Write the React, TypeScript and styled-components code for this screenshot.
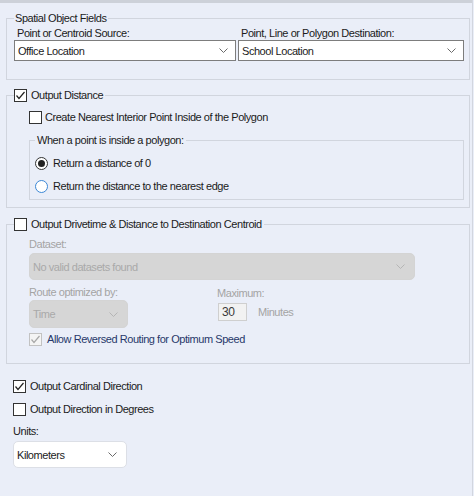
import styled, { createGlobalStyle } from 'styled-components'

const GlobalStyle = createGlobalStyle`
  html, body {
    margin: 0;
    padding: 0;
    background: #eaeef8;
  }
  body {
    font-family: "Liberation Sans", Arial, sans-serif;
    font-size: 11px;
    letter-spacing: -0.45px;
    color: #1b1b1b;
  }
`

const Page = styled.div`
  width: 473px;
  height: 496px;
  box-sizing: border-box;
  border-right: 1px solid #d2d6df;
  background: #eaeef8;
  overflow: hidden;
  display: flex;
  flex-direction: column;
`

const TopBar = styled.div`
  flex: none;
  height: 3px;
  background: #cdd1d9;
`

const Content = styled.div`
  display: flex;
  flex-direction: column;
  padding: 8px 2px 0 6px;
`

const Group = styled.fieldset<{ $mt?: number; $pb: number }>`
  margin: ${p => p.$mt ?? 0}px 0 0 0;
  padding: 0 5px ${p => p.$pb}px 7px;
  border: 1px solid #d1d5de;
  min-width: 0;
`

const Legend = styled.legend<{ $pl?: number }>`
  padding: 0 2px 0 ${p => p.$pl ?? 0}px;
  line-height: 14px;
`

const FieldGrid = styled.div`
  display: grid;
  grid-template-columns: 222px 226px;
  column-gap: 2px;
  margin-top: 1px;
`

const FieldLabel = styled.div`
  line-height: 14px;
  padding-left: 3px;
`

const Select = styled.div`
  height: 21px;
  box-sizing: border-box;
  border: 1px solid #7d7d7d;
  background: #fff;
  display: flex;
  align-items: center;
  justify-content: space-between;
  padding: 0 7px 0 3px;
`

const SoftSelect = styled.div<{ $w: number; $disabled?: boolean; $h?: number }>`
  width: ${p => p.$w}px;
  height: ${p => p.$h ?? 27}px;
  box-sizing: border-box;
  border-radius: 5px;
  border: 1px solid ${p => (p.$disabled ? '#d4d4d4' : '#dcdfe6')};
  background: ${p => (p.$disabled ? '#d6d6d6' : '#fff')};
  color: ${p => (p.$disabled ? '#a9a9a9' : 'inherit')};
  display: flex;
  align-items: center;
  justify-content: space-between;
  padding: 0 9px 0 3px;
`

const Body = styled.div`
  display: flex;
  flex-direction: column;
  padding-left: 15px;
`

const CheckRow = styled.div<{ $mt?: number; $gap?: number; $color?: string }>`
  display: flex;
  align-items: center;
  gap: ${p => p.$gap ?? 4}px;
  height: 16px;
  margin-top: ${p => p.$mt ?? 0}px;
  color: ${p => p.$color ?? 'inherit'};
  white-space: nowrap;
`

const Box = styled.span<{ $disabled?: boolean }>`
  flex: none;
  width: 13px;
  height: 13px;
  box-sizing: border-box;
  border: 1px solid ${p => (p.$disabled ? '#c2c2c2' : '#333')};
  background: ${p => (p.$disabled ? '#f4f4f4' : '#fff')};
  display: inline-flex;
  align-items: center;
  justify-content: center;
`

const Radio = styled.span<{ $on?: boolean }>`
  flex: none;
  width: 13px;
  height: 13px;
  box-sizing: border-box;
  border-radius: 50%;
  border: 1px solid ${p => (p.$on ? '#333' : '#3b87d6')};
  background: #fff;
  display: inline-flex;
  align-items: center;
  justify-content: center;
  &::after {
    content: '';
    display: ${p => (p.$on ? 'block' : 'none')};
    width: 7px;
    height: 7px;
    border-radius: 50%;
    background: #222;
  }
`

const InnerGroup = styled.fieldset`
  margin: 8px 0 0 0;
  padding: 0 0 5px 5px;
  border: 1px solid #d1d5de;
  min-width: 0;
`

const Label = styled.div<{ $mt?: number; $disabled?: boolean }>`
  line-height: 14px;
  margin-top: ${p => p.$mt ?? 0}px;
  color: ${p => (p.$disabled ? '#a4a4a4' : 'inherit')};
`

const RouteRow = styled.div`
  display: flex;
  margin-top: 5px;
`

const RouteCol = styled.div<{ $w?: number; $ml?: number }>`
  display: flex;
  flex-direction: column;
  width: ${p => (p.$w ? `${p.$w}px` : 'auto')};
  margin-left: ${p => p.$ml ?? 0}px;
`

const MaxRow = styled.div`
  display: flex;
  align-items: center;
  gap: 11px;
  margin-top: 3px;
  color: #a4a4a4;
`

const NumInput = styled.div`
  width: 29px;
  height: 18px;
  box-sizing: border-box;
  border: 1px solid #cfcfcf;
  background: #f2f2f2;
  color: #3a3a3a;
  font-size: 12px;
  line-height: 16px;
  padding-left: 3px;
  margin-left: 1px;
`

const Bottom = styled.div`
  display: flex;
  flex-direction: column;
  padding-left: 7px;
`

const Chevron = ({ color = '#6a6a6a' }: { color?: string }) => (
  <svg width="9" height="5" viewBox="0 0 9 5">
    <polyline points="0.5,0.5 4.5,4.5 8.5,0.5" fill="none" stroke={color} strokeWidth="1" />
  </svg>
)

const Check = ({ color = '#222' }: { color?: string }) => (
  <svg width="11" height="11" viewBox="0 0 11 11">
    <polyline points="1.5,5.5 4,8.5 9.5,2" fill="none" stroke={color} strokeWidth="1.2" />
  </svg>
)

export default function App() {
  return (
    <>
      <GlobalStyle />
      <Page>
        <TopBar />
        <Content>
          <Group $pb={18}>
            <Legend $pl={1}>Spatial Object Fields</Legend>
            <FieldGrid>
              <div>
                <FieldLabel>Point or Centroid Source:</FieldLabel>
                <Select>
                  <span>Office Location</span>
                  <Chevron />
                </Select>
              </div>
              <div>
                <FieldLabel>Point, Line or Polygon Destination:</FieldLabel>
                <Select>
                  <span>School Location</span>
                  <Chevron />
                </Select>
              </div>
            </FieldGrid>
          </Group>

          <Group $mt={7} $pb={7}>
            <Legend>
              <CheckRow>
                <Box>
                  <Check />
                </Box>
                Output Distance
              </CheckRow>
            </Legend>
            <Body>
              <CheckRow $mt={6} $gap={3}>
                <Box />
                Create Nearest Interior Point Inside of the Polygon
              </CheckRow>
              <InnerGroup>
                <Legend $pl={2}>When a point is inside a polygon:</Legend>
                <CheckRow $mt={8} $gap={5}>
                  <Radio $on />
                  Return a distance of 0
                </CheckRow>
                <CheckRow $mt={7} $gap={5}>
                  <Radio />
                  Return the distance to the nearest edge
                </CheckRow>
              </InnerGroup>
            </Body>
          </Group>

          <Group $mt={8} $pb={16}>
            <Legend>
              <CheckRow>
                <Box />
                Output Drivetime &amp; Distance to Destination Centroid
              </CheckRow>
            </Legend>
            <Body>
              <Label $mt={5} $disabled>
                Dataset:
              </Label>
              <SoftSelect $w={386} $disabled style={{ marginTop: 2 }}>
                <span>No valid datasets found</span>
                <Chevron color="#b5b5b5" />
              </SoftSelect>
              <RouteRow>
                <RouteCol $w={99}>
                  <Label $disabled>Route optimized by:</Label>
                  <SoftSelect $w={99} $h={28} $disabled style={{ marginTop: 1 }}>
                    <span>Time</span>
                    <Chevron color="#b5b5b5" />
                  </SoftSelect>
                </RouteCol>
                <RouteCol $ml={89}>
                  <Label $disabled $mt={1}>
                    Maximum:
                  </Label>
                  <MaxRow>
                    <NumInput>30</NumInput>
                    Minutes
                  </MaxRow>
                </RouteCol>
              </RouteRow>
              <CheckRow $mt={3} $gap={5} $color="#27386a">
                <Box $disabled>
                  <Check color="#a8a8a8" />
                </Box>
                Allow Reversed Routing for Optimum Speed
              </CheckRow>
            </Body>
          </Group>

          <Bottom>
            <CheckRow $mt={14}>
              <Box>
                <Check />
              </Box>
              Output Cardinal Direction
            </CheckRow>
            <CheckRow $mt={7}>
              <Box />
              Output Direction in Degrees
            </CheckRow>
            <Label $mt={7}>Units:</Label>
            <SoftSelect $w={114} style={{ marginTop: 3 }}>
              <span>Kilometers</span>
              <Chevron />
            </SoftSelect>
          </Bottom>
        </Content>
      </Page>
    </>
  )
}
